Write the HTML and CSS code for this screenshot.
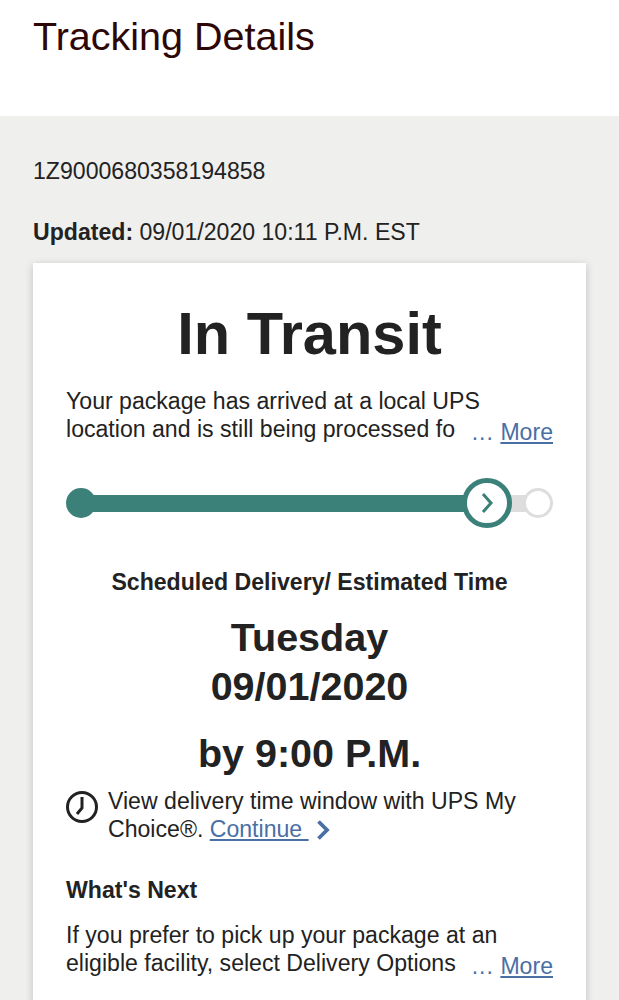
FILE: index.html
```html
<!DOCTYPE html>
<html lang="en">
<head>
    <meta charset="UTF-8">
    <meta name="viewport" content="width=device-width, initial-scale=1.0">
    <title>Tracking Details</title>
    <link rel="stylesheet" href="styles.css">
</head>
<body>
    <header class="page-head">
        <h1>Tracking Details</h1>
    </header>

    <main class="content">
        <p class="number">1Z9000680358194858</p>
        <p class="updated"><strong>Updated:</strong> 09/01/2020 10:11 P.M. EST</p>

        <section class="card">
            <h2 class="status">In Transit</h2>

            <div class="clip-text">
                <p>Your package has arrived at a local UPS<br>location and is still being processed fo</p>
                <span class="more"><span class="dots">...</span> <a href="#">More</a></span>
            </div>

            <div class="progress">
                <span class="dot"></span>
                <span class="fill"></span>
                <span class="current">
                    <svg width="14" height="20" viewBox="0 0 14 20"><path d="M3 1l8 9-8 9" fill="none" stroke="#3b8079" stroke-width="3"/></svg>
                </span>
                <span class="rest"></span>
                <span class="end"></span>
            </div>

            <h3 class="sched-label">Scheduled Delivery/ Estimated Time</h3>
            <p class="sched-date">Tuesday<br>09/01/2020</p>
            <p class="sched-time">by 9:00 P.M.</p>

            <div class="window">
                <svg class="clock" width="32" height="32" viewBox="0 0 32 32"><circle cx="16" cy="16" r="14.5" fill="none" stroke="#222" stroke-width="3"/><path d="M16 6v11l-5 6" fill="none" stroke="#222" stroke-width="3"/></svg>
                <p>View delivery time window with UPS My<br>Choice®. <a href="#">Continue&nbsp;</a>
                    <svg class="chev" width="16" height="20" viewBox="0 0 16 20"><path d="M2.5 1.5l8.5 8.5-8.5 8.5" fill="none" stroke="#4a6fa5" stroke-width="3.8"/></svg>
                </p>
            </div>

            <h3 class="next-label">What's Next</h3>
            <div class="clip-text">
                <p>If you prefer to pick up your package at an<br>eligible facility, select Delivery Options</p>
                <span class="more"><span class="dots">...</span> <a href="#">More</a></span>
            </div>
        </section>
    </main>
</body>
</html>
```

FILE: styles.css
```css
html, body {
    height: 1000px;
    overflow: hidden;
}

body {
    margin: 0;
    font-family: "Liberation Sans", Arial, sans-serif;
    color: #222;
    background-color: #efefee;
}

p, h1, h2, h3 {
    margin: 0;
}

a {
    color: #4a6fa5;
}

.page-head {
    height: 116px;
    padding: 14px 33px 0;
    box-sizing: border-box;
    background-color: #fff;
}

.page-head h1 {
    font-size: 39.5px;
    line-height: 44px;
    font-weight: normal;
    color: #2d0606;
}

.content {
    padding: 41px 33px 0;
}

.number, .updated {
    font-size: 23.1px;
    line-height: 28px;
}

.updated {
    margin-top: 33px;
}

.card {
    margin-top: 17px;
    padding: 36px 33px 0;
    height: 720px;
    background-color: #fff;
    box-shadow: 0 2px 8px rgba(0, 0, 0, 0.2);
}

.status {
    font-size: 59.5px;
    line-height: 70px;
    text-align: center;
}

.clip-text {
    display: flex;
    align-items: flex-end;
    font-size: 23.1px;
    line-height: 28px;
}

.clip-text p {
    flex: 1;
    min-width: 0;
    white-space: nowrap;
}

.status + .clip-text {
    margin-top: 18px;
}

.more {
    flex: none;
    margin-bottom: -3px;
}

.dots {
    color: #4a6fa5;
    letter-spacing: 1px;
}

.progress {
    display: flex;
    align-items: center;
    height: 50px;
    margin-top: 35px;
}

.dot {
    width: 30px;
    height: 30px;
    border-radius: 50%;
    background-color: #3b8079;
}

.fill {
    flex: 1;
    height: 17px;
    margin: 0 -4px;
    background-color: #3b8079;
}

.current {
    display: flex;
    align-items: center;
    justify-content: center;
    position: relative;
    width: 50px;
    height: 50px;
    box-sizing: border-box;
    border: 5px solid #3b8079;
    border-radius: 50%;
    background-color: #fff;
}

.rest {
    width: 17px;
    height: 17px;
    margin: 0 -3px;
    background-color: #ddd;
}

.end {
    position: relative;
    width: 30px;
    height: 30px;
    box-sizing: border-box;
    border: 3px solid #ddd;
    border-radius: 50%;
    background-color: #fff;
}

.sched-label {
    margin-top: 40px;
    font-size: 23.1px;
    line-height: 28px;
    text-align: center;
}

.sched-date, .sched-time {
    font-size: 39.5px;
    line-height: 49px;
    font-weight: bold;
    text-align: center;
}

.sched-date {
    margin-top: 17px;
}

.sched-time {
    margin-top: 18px;
}

.window {
    display: flex;
    gap: 10px;
    margin-top: 9px;
    font-size: 23.1px;
    line-height: 28px;
}

.clock {
    margin-top: 4px;
}

.chev {
    margin-left: 1px;
    vertical-align: -3px;
}

.next-label {
    margin-top: 33px;
    font-size: 23.1px;
    line-height: 28px;
}

.next-label + .clip-text {
    margin-top: 17px;
}
```
